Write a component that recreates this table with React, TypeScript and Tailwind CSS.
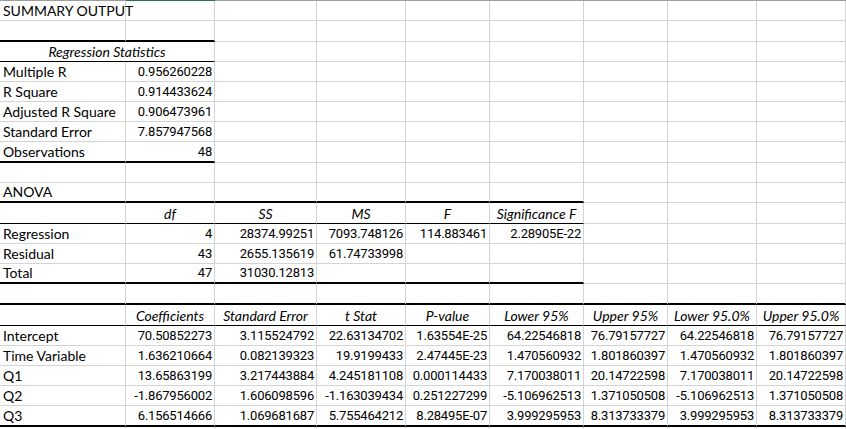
import React from "react";

type Row = {
  h: 20 | 21;
  cells: string[];
  head?: boolean;
  merged?: string;
  bottom?: { kind: "thick" | "thin"; span: number };
};

const widths = [
  "w-[126px]",
  "w-[89px]",
  "w-[102px]",
  "w-[89px]",
  "w-[84px]",
  "w-[94px]",
  "w-[84px]",
  "w-[89px]",
  "w-[89px]",
];

const rows: Row[] = [
  { h: 20, cells: ["SUMMARY OUTPUT"] },
  { h: 21, cells: [], bottom: { kind: "thick", span: 2 } },
  { h: 20, cells: [], merged: "Regression Statistics", bottom: { kind: "thin", span: 2 } },
  { h: 20, cells: ["Multiple R", "0.956260228"] },
  { h: 20, cells: ["R Square", "0.914433624"] },
  { h: 20, cells: ["Adjusted R Square", "0.906473961"] },
  { h: 20, cells: ["Standard Error", "7.857947568"] },
  { h: 21, cells: ["Observations", "48"], bottom: { kind: "thick", span: 2 } },
  { h: 20, cells: [] },
  { h: 20, cells: ["ANOVA"], bottom: { kind: "thick", span: 6 } },
  {
    h: 21,
    head: true,
    cells: ["", "df", "SS", "MS", "F", "Significance F"],
    bottom: { kind: "thin", span: 6 },
  },
  { h: 20, cells: ["Regression", "4", "28374.99251", "7093.748126", "114.883461", "2.28905E-22"] },
  { h: 20, cells: ["Residual", "43", "2655.135619", "61.74733998"] },
  { h: 20, cells: ["Total", "47", "31030.12813"], bottom: { kind: "thick", span: 6 } },
  { h: 21, cells: [], bottom: { kind: "thick", span: 9 } },
  {
    h: 21,
    head: true,
    cells: [
      "",
      "Coefficients",
      "Standard Error",
      "t Stat",
      "P-value",
      "Lower 95%",
      "Upper 95%",
      "Lower 95.0%",
      "Upper 95.0%",
    ],
    bottom: { kind: "thin", span: 9 },
  },
  {
    h: 20,
    cells: [
      "Intercept",
      "70.50852273",
      "3.115524792",
      "22.63134702",
      "1.63554E-25",
      "64.22546818",
      "76.79157727",
      "64.22546818",
      "76.79157727",
    ],
  },
  {
    h: 20,
    cells: [
      "Time Variable",
      "1.636210664",
      "0.082139323",
      "19.9199433",
      "2.47445E-23",
      "1.470560932",
      "1.801860397",
      "1.470560932",
      "1.801860397",
    ],
  },
  {
    h: 20,
    cells: [
      "Q1",
      "13.65863199",
      "3.217443884",
      "4.245181108",
      "0.000114433",
      "7.170038011",
      "20.14722598",
      "7.170038011",
      "20.14722598",
    ],
  },
  {
    h: 20,
    cells: [
      "Q2",
      "-1.867956002",
      "1.606098596",
      "-1.163039434",
      "0.251227299",
      "-5.106962513",
      "1.371050508",
      "-5.106962513",
      "1.371050508",
    ],
  },
  {
    h: 21,
    cells: [
      "Q3",
      "6.156514666",
      "1.069681687",
      "5.755464212",
      "8.28495E-07",
      "3.999295953",
      "8.313733379",
      "3.999295953",
      "8.313733379",
    ],
    bottom: { kind: "thick", span: 9 },
  },
  { h: 20, cells: [] },
];

const isNumber = (s: string) => /^-?[\d.]+(E[-+]\d+)?$/.test(s);

const bottomClass = (row: Row, col: number) => {
  if (row.bottom && col < row.bottom.span) {
    return row.bottom.kind === "thick"
      ? "border-b-2 border-b-black"
      : "border-b border-b-black";
  }
  return "border-b border-b-[#d4d4d4]";
};

const SheetRow = ({ row }: { row: Row }) => {
  const height = row.h === 21 ? "h-[21px]" : "h-[20px]";

  return (
    <div className={`flex ${height}`}>
      {row.merged && (
        <div
          className={`w-[215px] h-full flex items-end justify-center pb-[1px] italic border-r border-r-[#d4d4d4] ${bottomClass(row, 0)}`}
        >
          {row.merged}
        </div>
      )}
      {widths.map((w, i) => {
        if (row.merged && i < 2) return null;
        const text = row.cells[i] ?? "";
        let align = "justify-end pr-[2px]";
        if (i === 0) align = "justify-start pl-[3px]";
        if (row.head && i > 0) align = "justify-center italic";
        // numbers: roboto has even digit widths close to calibri's
        const num = isNumber(text)
          ? "font-['Roboto',sans-serif] text-[13px] tracking-[-0.2px]"
          : "";
        return (
          <div
            key={i}
            className={`${w} h-full flex items-end pb-[1px] whitespace-nowrap overflow-visible border-r border-r-[#d4d4d4] ${align} ${num} ${bottomClass(row, i)}`}
          >
            {text}
          </div>
        );
      })}
    </div>
  );
};

export default function App() {
  return (
    <div className="w-[846px] h-[429px] overflow-hidden bg-white text-black font-['Lato',sans-serif] text-[14px] leading-[17px]">
      <div className="flex h-[1px]">
        <div className="w-[126px] bg-[#9e9e9e]" />
        <div className="w-[89px] bg-[#217346]" />
        <div className="flex-1 bg-[#9e9e9e]" />
      </div>
      {rows.map((row, i) => (
        <SheetRow key={i} row={row} />
      ))}
    </div>
  );
}
